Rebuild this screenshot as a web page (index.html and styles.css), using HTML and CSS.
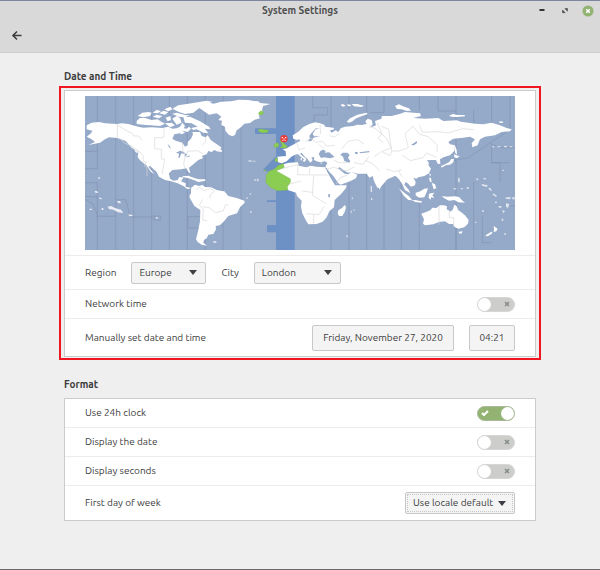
FILE: index.html
```html
<!DOCTYPE html>
<html lang="en">
<head>
<meta charset="utf-8">
<title>System Settings</title>
<link rel="stylesheet" href="styles.css">
</head>
<body>
<header class="header">
  <div class="titlebar">
    <h1 class="window-title">System Settings</h1>
    <div class="window-controls">
      <button class="control" aria-label="Minimize"><svg width="12" height="12" viewBox="0 0 12 12"><path d="M3.500 5h5" stroke="#333" stroke-width="2"/></svg></button>
      <button class="control" aria-label="Maximize"><svg width="12" height="12" viewBox="0 0 12 12"><path d="M5.800 3.500h2.700v2.700zM3.500 5v2.700h2.700z" fill="#444" stroke="#444" stroke-width=".5"/></svg></button>
      <button class="control" aria-label="Close"><svg width="12" height="12" viewBox="0 0 12 12"><circle cx="6" cy="6" r="5.500" fill="#92b372"/><path d="M4.200 4.200l3.600 3.600m0-3.600L4.200 7.800" stroke="#fff" stroke-width="1.500"/></svg></button>
    </div>
  </div>
  <div class="toolbar">
    <button class="control" aria-label="Back"><svg width="12" height="12" viewBox="0 0 12 12"><path d="M10.500 5.500H2M6 1.500l-4 4 4 4" fill="none" stroke="#3c3c3c" stroke-width="1.600"/></svg></button>
  </div>
</header>
<main class="content">
  <section>
    <h2 class="section-title">Date and Time</h2>
    <div class="highlight">
      <div class="panel">
        <div class="map-row">
          <svg class="map" viewBox="0 0 1290 463" role="img" aria-label="Time zone map">
            <rect width="1290" height="463" fill="#95a9c9"/>
            <g fill="#6d90c5">
              <path d="M573 0h56v463h-56zM510 97h63v17h-63zM534 221l36-37h5v40l-27 3zM546 313h30v5h-30zM546 387h30v22h-30z"/>
            </g>
            <path fill="none" stroke="#8294b2" stroke-width="2" d="M37 0v166M92 0v463M146 0v463M200 0v463M253 0v463M307 0v463M361 0v463M0 166h37v52H0M0 260h37v105M0 302h37m0 57v104M0 310l24 14 15 37h53m0-50h30l14 52h64M205 360h22v12h-22zM361 362h-52v34h45M414 0v463M468 90v373M683 0v35h45v22h-41v36M738 0v463M792 0v40M792 250v213M845 0v463M897 0v50h-40M897 250v213M949 90v373M1003 0v45m0 258v160M1059 0v45h54m0 282v136M1113 0v463M1166 40v65m0 152v206M1220 0v80m0 60v60h55M1275 0v100l-125 85-50 10M1220 145l25 10h45M1220 200h25v60M1275 330h15M1192 360v80h28"/>
            <g fill="#fff">
              <path d="M5 88L20 80L42 78L60 82L97 84L110 82L130 84L160 92L175 95L200 94L232 96L250 92L262 98L275 97L285 92L292 80L300 90L296 97L305 98L312 92L318 98L308 108L292 104L285 112L268 115L262 128L272 134L292 140L300 152L308 148L308 138L318 128L324 115L322 108L345 108L350 120L362 124L368 118L378 133L400 148L410 155L405 160L395 165L388 162L380 168L370 165L365 175L350 180L355 186L340 192L325 205L312 215L316 232L310 228L304 217L288 220L262 222L252 232L255 248L265 254L278 252L282 244L296 244L288 256L302 262L302 272L318 276L308 280L295 270L278 262L255 255L240 252L222 242L215 228L195 210L190 212L208 234L198 228L184 208L168 196L158 184L160 168L140 155L122 135L97 126L72 124L60 130L45 140L10 147L30 138L20 130L5 122L18 112L22 104L5 100Z"/>
              <path d="M155 75L165 66L180 66L200 72L218 70L230 78L240 83L225 90L195 88L175 86L155 84ZM158 60L172 50L190 48L200 50L195 60L175 64ZM203 50L215 42L228 45L218 52ZM203 62L215 56L232 60L222 67ZM222 52L235 44L250 48L240 56ZM240 82L260 80L270 88L255 94ZM242 65L256 60L258 72L248 76ZM262 68L275 60L285 66L290 80L275 86ZM295 64L315 62L345 76L372 92L377 100L360 98L370 112L355 110L335 100L325 102L318 96L338 92L320 82L300 80ZM238 40L256 32L262 40L250 46ZM262 38L280 28L320 22L365 14L382 17L360 26L340 38L325 50L300 54L282 48ZM262 53L275 50L300 57L314 58L300 64L280 62ZM278 107L292 104L300 110L290 115ZM147 161L155 165L160 172L152 169ZM393 153L410 162L411 168L394 166Z"/>
              <path d="M291 241L310 239L330 247L342 250L360 250L362 254L340 258L328 253L308 246L296 244Z"/>
              <path d="M318 276L330 266L342 270L353 267L360 273L378 274L395 282L410 285L418 286L430 300L455 306L478 314L479 320L465 334L456 352L430 360L415 378L404 388L392 390L393 400L385 414L370 416L365 427L357 432L355 440L366 449L350 446L338 438L333 430L340 402L345 375L346 342L328 330L315 307L313 300L318 292Z"/>
              <g transform="translate(-15 -18)">
                <path d="M398 456l5-3 8 3-5 3zM55 262h5v4h-5zM44 303h7l4 6-9-1zM57 323h6l3 5-7-1zM83 350l10-2 12 6 18 5 7 10-16-2-14-8-13-2zM110 334l9-1 5 6-8 1zM145 373l10 1 4 4-11 1zM65 354h5v6h-5zM29 356h6v4h-6zM228 382h5v4h-5z" opacity=".8"/>
              </g>
              <g transform="translate(405 -18)">
                <path d="M-65 52l14-11 20-3 12 3 22-6 30-1 23-5 28 1 18 3 13 1 5 5 31 3-22 6-3 12 3 8-13 10 4 7-16 4-14 10-17 2-12 12-11 8-5 14-8 4-11-5-10-12-1-12-11-5 2-13-11-2 9-10-14-10-23 4z"/>
                <path d="M165 237L192 222L207 218L234 217L236 227L259 232L272 227L288 230L316 232L324 250L336 270L345 286L380 286L378 294L364 311L344 330L342 352L328 364L320 382L308 395L290 402L265 403L257 390L247 370L243 350L245 332L231 318L228 308L205 301L180 290Z"/>
                <path d="M355 361L367 353L374 345L378 352L374 366L367 378L357 378L353 370Z"/>
                <path d="M361 45l8-3 8 5-8 3zM382 43l10 1v5l-9-1zM395 42l17 0 20 5-8 4-22-2z"/>
              </g>
              <g transform="translate(555 0)">
                <path d="M22 182L48 180L47 166L38 160L50 157L62 150L72 145L84 138L90 136L88 126L93 124L97 136L110 137L125 134L130 125L150 120L132 121L128 113L137 100L148 98L138 97L125 110L118 120L120 128L112 138L104 143L98 135L92 128L80 132L70 128L68 118L85 107L100 93L118 84L135 79L150 82L163 86L165 92L190 95L193 100L180 103L185 110L197 103L205 108L212 97L225 92L250 90L262 86L275 87L290 84L286 76L293 68L305 72L308 85L300 95L318 88L315 75L335 68L350 62L372 60L392 56L392 236L375 240L352 250L345 258L330 275L322 275L312 255L308 240L298 245L290 233L262 233L245 228L262 236L258 247L240 256L212 266L205 262L190 240L172 222L166 213L172 200L165 196L150 199L140 196L132 192L133 184L124 184L128 192L122 200L116 194L112 188L105 183L95 170L90 173L102 183L109 189L105 197L98 196L102 190L92 182L84 174L75 176L64 182L50 196L35 202L23 198Z"/>
                <path d="M230 78L238 68L262 56L290 50L293 54L270 62L256 68L248 76L238 80ZM92 186L96 186L95 194L92 193ZM150 200L158 200L154 203Z"/>
              </g>
              <g transform="translate(900 0)">
                <path d="M44 62L46 53L60 48L85 50L105 52L108 60L85 66L120 68L160 66L175 75L215 73L228 77L270 83L295 85L320 80L345 88L365 96L380 100L375 106L350 108L330 118L300 122L285 130L278 148L262 154L260 142L270 130L255 122L235 125L205 128L190 138L195 145L210 148L208 165L195 178L175 184L165 190L166 204L158 203L153 192L140 192L125 193L132 200L130 207L138 218L132 232L118 240L100 244L94 248L85 245L92 258L90 268L78 272L68 262L62 258L58 266L70 280L76 292L60 282L52 265L42 250L32 240L25 236L12 240L0 250L-10 250L-10 60L20 60L46 53Z"/>
              </g>
              <g transform="translate(840 -18)">
                <path d="M90 48l12-5 12 6 18 6 6 7-12 1-16-5-14-1zM252 77l12-5 13 3 22 0 1 4-24 2-17-1zM401 95l11-1 3 4-10 1zM270 167l5 12 1 15-5-4-2-11zM267 193l8 3 9 3-9 6-7-3zM267 207l-2 10-10 7-13 2-12 7-2-5 14-6 10-5 7-10zM193 250l5 3-3 7zM192 263l6 1 2 12-5-1zM200 278l10 5 4 12-8 3-3-10zM40 287l7 4-4 8zM102 295l12 10 18 14 10 12-12-1-15-14zM139 329l15 2 17 3-2 4-18-2zM152 308l14-4 12-8 11-1-4 12-7 15-16 1-10-7zM192 312l5-2 12-2-7 7 6 10-9-4-2 8-6-6zM230 318l16 2 25-1 12 3 8 9 9 7-20-1-12-7-16 2-14-7z"/>
                <path d="M169 371L183 366L196 361L202 353L214 354L225 346L236 346L246 349L245 358L257 365L264 358L268 344L274 347L280 361L289 367L300 376L311 390L309 401L298 412L280 416L270 412L264 402L252 402L240 394L222 396L205 403L180 406L174 401L177 388ZM281 425l12-1-4 7-7-1zM386 408l12 8-4 8-8 2 1-9zM363 435l16-10 4 4-13 9-8 1z"/>
                <g opacity=".7"><path d="M280 262l5 5-2 12-4-5zM333 265l8 2-5 5zM350 282l18 4-2 5-15-4zM370 293l7 2 4 8-8-3zM384 310l13 8-5 2-9-6zM354 263l12 3-8 3zM423 322l16 0-5 6-13-2zM411 239l8 1-5 4zM423 340l10 2-4 12-6-4zM412 360l8 3-5 7zM418 430h5v4h-5zM263 296l12-3-5 6zM285 295l10 0-4 4zM305 292h7v4h-7zM401 348h8v5h-8zM442 322h7v6h-7zM17 288h4v18h-4zM18 325h4v5h-4zM390 335h6v4h-6zM379 166l10 4-4 3zM396 169h11v3h-11zM417 168h9v4h-9zM434 169h8v3h-8zM330 395h4v4h-4zM352 360h4v6h-4zM410 386h5v6h-5z"/></g>
              </g>
              <g opacity=".55"><path d="M490 193h10v4h-10zM503 194h8v3h-8zM508 250h6v5h-6zM516 248h5v8h-5zM494 291h4v5h-4zM484 304h4v5h-4zM495 345h5v5h-5zM800 304h4v6h-4zM797 344h4v6h-4zM784 418h5v6h-5zM805 340h4v4h-4z"/></g>
            </g>
            <g transform="translate(405 -18)" fill="#95a9c9">
              <path d="M296 192l6-10 8-3 7 4-3 5 14-1 9 8 7 6-14 4-18-3-9 2zM368 188l14 0 7 7-5 8 7 11-4 4-14-5-4-13-8-6zM404 187l8-2 2 6-7 2zM418 187l30-4v4l-27 3zM358 231l12 8 13 9 10-1-8 6-11-2-11-9-9-6zM325 312h5v10h-5zM573 165l8-5 10-7v6l-9 7z"/>
              <path d="M316 234L320 234L333 254L345 273L346 281L342 279L330 258Z"/>
            </g>
            <g fill="#95a9c9">
              <path d="M273 170l12-6 14 5-4 5-6-2-5 13h-4l2-12zM297 172l9 2-4 8zM300 184l15-6-2 4zM248 145l6 5 4 9-6-5z"/>
            </g>
            <g fill="none" stroke="#d8d8da" stroke-width="2">
              <path d="M97 84v42l11 4 10 11 20 8 28 20 9 11-1 16 10 2-6 12 8 5v25M97 87l25 16 20 9 4 8 15 0 10 13M237 97v25l-5 3h-23v33l20 2v29h10l-8 45M292 140l2 30 6 12-4 22 4 14M307 175v-9l30-2 18 10M351 148l10-10 2-16M333 280l10-6 14 10 20-6 12 8-15 12 2 10M353 310l-10 18 12 12-2 32 14 2M353 332l20 3 18 15 24-5 6-18h10"/>
              <path transform="translate(405 -18)" d="M168 240l66-16-1 30 35 1 1-20M270 255h55M281 256l-4 60 42 25M245 303l32 4M204 283l40-10M259 371l38 3 16-25M281 375v25M318 239l23-7 35 11 27-12M348 282l14-20 20-6M256 155l17-11 13 13 22-3 13 15 24-3M300 105l2 27M312 178l-15-15M328 137l16 4 15-11M230 159l7 20 18-5M365 177l19-23 29-5 19 13M340 210l17 8 25 0M402 218l27 5 18-24M472 99l14 32-12 14 16 13M447 107l20 9 31 27 16 31-28 10-23 16M484 109l22 9 9 65 22 0 28-10-10-42 24-23M515 184l-5 13-24-12M578 108l21 25 26 7 27 25-1 20M598 104l9 23 49-2 27 4 45-13 33 3M547 196l24 16 38-9 10-14 31 13M435 211l23 10 22 23M498 237l26 8 21-6M536 242l9 17"/>
              <path d="M1062 330v56M1093 342v23h13v28"/>
            </g>
            <g transform="translate(405 -18)" fill="#8bcd52" stroke="#79b04f" stroke-width="1">
              <path d="M116 68l7-6 8 4-2 7-12 2zM114 119l9-2 12 2 12 2-5 6-13 2-11-3zM161 165l8-7 8 3-2 9-11 3zM180 151l6-2 5 11 7 6 5 5-8 3-15-1 7-5zM166 204l7 1-1 11-7-2zM163 238L175 226L190 221L193 232L180 238L168 242L211 266L212 276L202 290L204 300L172 302L150 292L137 277L139 255L148 243ZM131 240l9 0-5 4z"/>
            </g>
            <g transform="translate(405 -18)"><circle cx="192" cy="146" r="11" fill="#e93a3a"/><path d="M185 143h4m6 0h4m-12 8h3m4 0h3m-7-4h4" stroke="#fff" stroke-width="3"/></g>
          </svg>
        </div>
        <div class="row row-fields">
          <label for="region">Region</label>
          <span class="dropdown region"><select id="region"><option>Europe</option></select><svg class="arrow" width="8" height="5" viewBox="0 0 8 5"><path d="M0 0h8L4 5z"/></svg></span>
          <label for="city">City</label>
          <span class="dropdown city"><select id="city"><option>London</option></select><svg class="arrow" width="8" height="5" viewBox="0 0 8 5"><path d="M0 0h8L4 5z"/></svg></span>
        </div>
        <div class="row row-switch">
          <label class="row-label" for="network">Network time</label>
          <span class="switch"><input type="checkbox" id="network"><svg class="cross" width="6" height="6" viewBox="0 0 6 6"><path d="M1 1l4 4m0-4L1 5"/></svg></span>
        </div>
        <div class="row row-manual">
          <span class="row-label">Manually set date and time</span>
          <button class="value date">Friday, November 27, 2020</button>
          <button class="value time">04:21</button>
        </div>
      </div>
    </div>
  </section>
  <section class="format">
    <h2 class="section-title">Format</h2>
    <div class="panel">
      <div class="row row-switch">
        <label class="row-label" for="clock">Use 24h clock</label>
        <span class="switch"><input type="checkbox" id="clock" checked><svg class="tick" width="8" height="6" viewBox="0 0 8 6"><path d="M1 3l2 2 4-4"/></svg></span>
      </div>
      <div class="row row-switch">
        <label class="row-label" for="date">Display the date</label>
        <span class="switch"><input type="checkbox" id="date"><svg class="cross" width="6" height="6" viewBox="0 0 6 6"><path d="M1 1l4 4m0-4L1 5"/></svg></span>
      </div>
      <div class="row row-switch">
        <label class="row-label" for="seconds">Display seconds</label>
        <span class="switch"><input type="checkbox" id="seconds"><svg class="cross" width="6" height="6" viewBox="0 0 6 6"><path d="M1 1l4 4m0-4L1 5"/></svg></span>
      </div>
      <div class="row row-week">
        <label class="row-label" for="week">First day of week</label>
        <span class="dropdown week"><select id="week"><option>Use locale default</option></select><svg class="arrow" width="8" height="5" viewBox="0 0 8 5"><path d="M0 0h8L4 5z"/></svg></span>
      </div>
    </div>
  </section>
</main>
</body>
</html>
```
FILE: styles.css
```css
* { box-sizing: border-box; }

body {
  margin: 0;
  min-height: 100vh;
  background: #efefef;
  border-top: 1px solid #7c86a0;
  border-bottom: 1px solid #6b6b6b;
  color: #3c3c3c;
  font: 10px/16px Ubuntu, "Noto Sans", sans-serif;
}

button, select { font: inherit; color: inherit; }

.header {
  background: #d9d9d9;
  border-bottom: 1px solid #cecece;
}

.titlebar {
  display: grid;
  grid-template-columns: 1fr auto 1fr;
  align-items: center;
  height: 19px;
  padding: 0 6px;
}

.window-title {
  grid-column: 2;
  margin: 0;
  font-size: 10px;
  font-weight: 600;
  color: #505050;
}

.window-controls {
  display: flex;
  justify-content: flex-end;
  gap: 11px;
}

.control {
  display: flex;
  padding: 0;
  border: 0;
  background: none;
}

.toolbar {
  display: flex;
  align-items: center;
  height: 32px;
  padding: 0 11px;
}

.content { padding: 16px 64px; }

.section-title {
  margin: 0;
  font-size: 10px;
  line-height: 16px;
  font-weight: 700;
}

.highlight {
  margin: 1px -5px 0;
  padding: 2px 3px 1px;
  border: 2px solid #f0161f;
}

.panel {
  background: #fff;
  border: 1px solid #cccccc;
}

.map-row {
  padding: 5px 20px;
  border-bottom: 1px solid #ececec;
}

.map {
  display: block;
  width: 100%;
}

.row {
  display: flex;
  align-items: center;
  gap: 15px;
  padding: 0 20px;
  border-bottom: 1px solid #ececec;
}

.row:last-child { border-bottom: 0; }
.row-fields { height: 34px; }
.row-switch { height: 29px; }
.row-manual { height: 37px; }
.row-week { height: 34px; }
.row-label { flex: 1; }

.dropdown {
  display: grid;
  align-items: center;
}

.dropdown select {
  grid-area: 1 / 1;
  width: 100%;
  height: 22px;
  padding: 0 7px;
  appearance: none;
  background: #f4f4f4;
  border: 1px solid #c8c8c8;
  border-radius: 2px;
}

.arrow {
  grid-area: 1 / 1;
  justify-self: end;
  margin-right: 9px;
  fill: #3f3f46;
  pointer-events: none;
}

.region { width: 75px; }
.city { width: 87px; }
.week { width: 110px; }

.week select {
  outline: 1px dotted #c8c8c8;
  outline-offset: -3px;
}

.value {
  height: 26px;
  padding: 0;
  background: #f4f4f4;
  border: 1px solid #c8c8c8;
  border-radius: 2px;
}

.date { width: 142px; }
.time { width: 46px; }

.switch {
  display: grid;
  align-items: center;
}

.switch input {
  grid-area: 1 / 1;
  display: flex;
  width: 38px;
  height: 15px;
  margin: 0;
  appearance: none;
  background: #cdcdcb;
  border: 1px solid #d6d6d6;
  border-radius: 8px;
}

.switch input::before {
  content: "";
  width: 13px;
  height: 13px;
  background: #fff;
  border-radius: 50%;
}

.switch input:checked {
  justify-content: flex-end;
  background: #92b372;
  border-color: #a9b89a;
}

.switch svg {
  grid-area: 1 / 1;
  fill: none;
  pointer-events: none;
}

.cross {
  justify-self: end;
  margin-right: 5px;
  stroke: #858b85;
  stroke-width: 1.5px;
}

.tick {
  margin-left: 4px;
  stroke: #fff;
  stroke-width: 2px;
}

.format { margin-top: 17px; }
.format .panel { margin-top: 5px; }
```
